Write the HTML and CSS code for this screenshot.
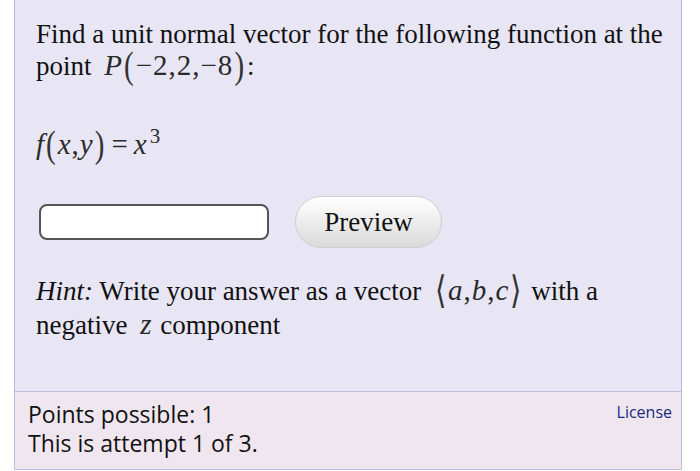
FILE: index.html
```html
<!DOCTYPE html>
<html lang="en">
<head>
    <meta charset="UTF-8">
    <title>Question</title>
    <link rel="stylesheet" href="styles.css">
</head>
<body>
    <div class="question">
        <div class="question-body">
            <p class="prompt">Find a unit normal vector for the following function at the point <span class="math"><i>P</i><span class="paren">(</span>&minus;2,2,&minus;8<span class="paren">)</span></span>:</p>
            <p class="formula"><span class="math"><i>f</i><span class="paren">(</span><i>x</i>,<i>y</i><span class="paren">)</span><span class="eq">=</span><i>x</i><sup>3</sup></span></p>
            <div class="answer-row">
                <input type="text" class="answer-input">
                <button class="btn-preview">Preview</button>
            </div>
            <p class="hint"><i>Hint:</i> Write your answer as a vector <span class="math"><span class="paren">&lang;</span><i>a</i>,<i>b</i>,<i>c</i><span class="paren">&rang;</span></span> with a negative <span class="math"><i>z</i></span> component</p>
        </div>
        <div class="question-footer">
            <div class="points">
                <div>Points possible: 1</div>
                <div>This is attempt 1 of 3.</div>
            </div>
            <a href="#" class="license">License</a>
        </div>
    </div>
</body>
</html>
```

FILE: styles.css
```css
body {
    margin: 0;
    background: #fff;
}

.question {
    margin: 0 18px 0 14px;
    border: 1px solid #bdbcdc;
    border-top: none;
}

.question-body {
    background: #e8e6f4;
    padding: 18px 12px 49px 21px;
    font-family: "Liberation Serif", "Times New Roman", serif;
    font-size: 27px;
    color: #111;
}

.question-body p {
    margin: 0;
}

.prompt {
    line-height: 32px;
}

.math {
    font-family: "Liberation Serif", "Times New Roman", serif;
    font-size: 29px;
    line-height: 0;
    letter-spacing: 1px;
    color: #2a2a2a;
    margin: 0 1px 0 6px;
}

.math i {
    font-style: italic;
}

.paren {
    display: inline-block;
    transform: scaleY(1.3);
    color: #333;
    margin: 0 1px;
}

.eq {
    margin: 0 5px;
}

sup {
    font-size: 21px;
    line-height: 0;
    margin-left: 2px;
}

.formula {
    margin-top: 47px !important;
    line-height: 32px;
}

.formula .math {
    margin-left: 0;
}

.answer-row {
    display: flex;
    align-items: center;
    gap: 26px;
    margin-top: 35px;
}

.answer-input {
    width: 230px;
    height: 36px;
    box-sizing: border-box;
    margin: 0 0 0 3px;
    border: 2px solid #555;
    border-radius: 8px;
    background: #fff;
}

.btn-preview {
    width: 147px;
    height: 52px;
    border: 1px solid #cfcfcf;
    border-radius: 26px;
    background: linear-gradient(#ffffff, #dadada);
    font-family: "Liberation Serif", "Times New Roman", serif;
    font-size: 27px;
    color: #111;
}

.hint {
    margin-top: 26px !important;
    line-height: 34px;
}

.question-footer {
    display: flex;
    justify-content: space-between;
    align-items: flex-start;
    background: #f0e6f0;
    border-top: 1px solid #bdbcdc;
    padding: 8px 9px 11px 13px;
    font-family: "Open Sans", sans-serif;
}

.points {
    font-size: 23px;
    line-height: 29px;
    color: #111;
}

.license {
    color: #1a2a80;
    text-decoration: none;
    font-size: 16px;
    margin-top: 1px;
}
```
